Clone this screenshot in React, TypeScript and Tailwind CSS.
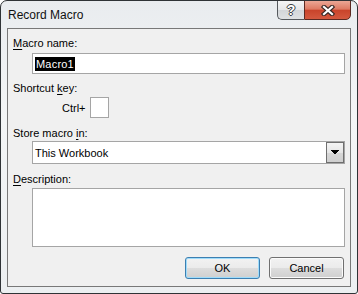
import React from "react";

const font = { fontFamily: '"Liberation Sans", Arial, sans-serif' };

function U({ children }: { children: React.ReactNode }) {
  return <span className="underline underline-offset-[2px] decoration-1">{children}</span>;
}

export default function App() {
  return (
    <div
      style={font}
      className="w-[358px] h-[294px] flex flex-col border border-[#2f3336] rounded-t-[7px] rounded-b-[3px] bg-[linear-gradient(180deg,#e9ecef_0%,#f3f5f6_40%,#eceff1_100%)] px-[6px] pb-[6px] overflow-hidden"
    >
      {/* Title bar */}
      <div className="h-[27px] flex items-start justify-between">
        <div className="pt-[7px] pl-[1px] text-[12px] leading-[14px] text-[#111]">Record Macro</div>
        <div className="flex -mt-px">
          <div className="w-[27px] h-[20px] border border-[#55595d] border-r-0 rounded-bl-[5px] bg-[linear-gradient(180deg,#f4f5f6_0%,#e4e6e8_50%,#d3d6d9_51%,#dfe1e3_100%)] flex items-center justify-center">
            <span className="text-[14px] leading-none font-bold text-white [text-shadow:1px_0_0_#3b3f44,-1px_0_0_#3b3f44,0_1px_0_#3b3f44,0_-1px_0_#3b3f44]">
              ?
            </span>
          </div>
          <div className="w-[47px] h-[20px] border border-[#5c2a22] rounded-br-[5px] bg-[linear-gradient(180deg,#eba795_0%,#dd7a63_45%,#c9442b_52%,#d4593f_100%)] flex items-center justify-center">
            <svg width="14" height="11" viewBox="0 0 14 11">
              <path d="M3 2 L11 9 M11 2 L3 9" stroke="#3b2a26" strokeWidth="4.5" strokeLinecap="square" />
              <path d="M3 2 L11 9 M11 2 L3 9" stroke="#ffffff" strokeWidth="2.2" strokeLinecap="square" />
            </svg>
          </div>
        </div>
      </div>

      {/* Client area */}
      <div className="flex-1 border border-[#787878] bg-[#f0f0f0] text-[11px] text-black flex flex-col">
        <div className="pl-[5px] mt-[7px] h-[14px] leading-[14px]">
          <U>M</U>acro name:
        </div>
        <div className="ml-[24px] mr-[5px] mt-[3px] h-[21px] border border-[#a5a5a5] bg-white flex items-center pl-[2px]">
          <span className="bg-black text-white px-[1px] leading-[14px] tracking-[0.2px]">Macro1</span>
        </div>

        <div className="pl-[5px] mt-[7px] h-[14px] leading-[14px]">
          Shortcut <U>k</U>ey:
        </div>
        <div className="mt-[2px] flex items-center pl-[54px]">
          <span className="leading-[14px] mr-[4px]">Ctrl+</span>
          <div className="w-[19px] h-[21px] border border-[#a5a5a5] bg-white" />
        </div>

        <div className="pl-[5px] mt-[8px] h-[14px] leading-[14px]">
          Store macro <U>i</U>n:
        </div>
        <div className="ml-[24px] mr-[5px] mt-[1px] h-[23px] border border-[#a5a5a5] bg-white flex items-center">
          <span className="flex-1 pl-[2px] leading-[14px] text-[#000]">This Workbook</span>
          <div className="w-[18px] h-[21px] border border-[#6f6f6f] bg-[linear-gradient(180deg,#f4f4f4_0%,#e6e6e6_50%,#d7d7d7_51%,#cfcfcf_100%)] flex items-center justify-center">
            <svg width="8" height="5" viewBox="0 0 8 5">
              <path d="M0 0 H8 V1 H7 V2 H6 V3 H5 V4 H3 V3 H2 V2 H1 V1 H0 Z" fill="#000" />
            </svg>
          </div>
        </div>

        <div className="pl-[5px] mt-[8px] h-[14px] leading-[14px]">
          <U>D</U>escription:
        </div>
        <div className="ml-[24px] mr-[5px] mt-[2px] h-[59px] border border-[#a5a5a5] bg-white" />

        <div className="mt-[10px] flex justify-end gap-[9px] pr-[6px]">
          <button className="w-[75px] h-[22px] rounded-[3px] border border-[#3c7fb1] shadow-[inset_0_0_0_1px_#9fdcfb] bg-[linear-gradient(180deg,#f2f2f2_0%,#ebebeb_50%,#dddddd_51%,#cfcfcf_100%)] text-[11px] text-black leading-none">
            OK
          </button>
          <button className="w-[75px] h-[22px] rounded-[3px] border border-[#707070] shadow-[inset_0_0_0_1px_#fbfbfb] bg-[linear-gradient(180deg,#f2f2f2_0%,#ebebeb_50%,#dddddd_51%,#cfcfcf_100%)] text-[11px] text-black leading-none">
            Cancel
          </button>
        </div>
      </div>
    </div>
  );
}
